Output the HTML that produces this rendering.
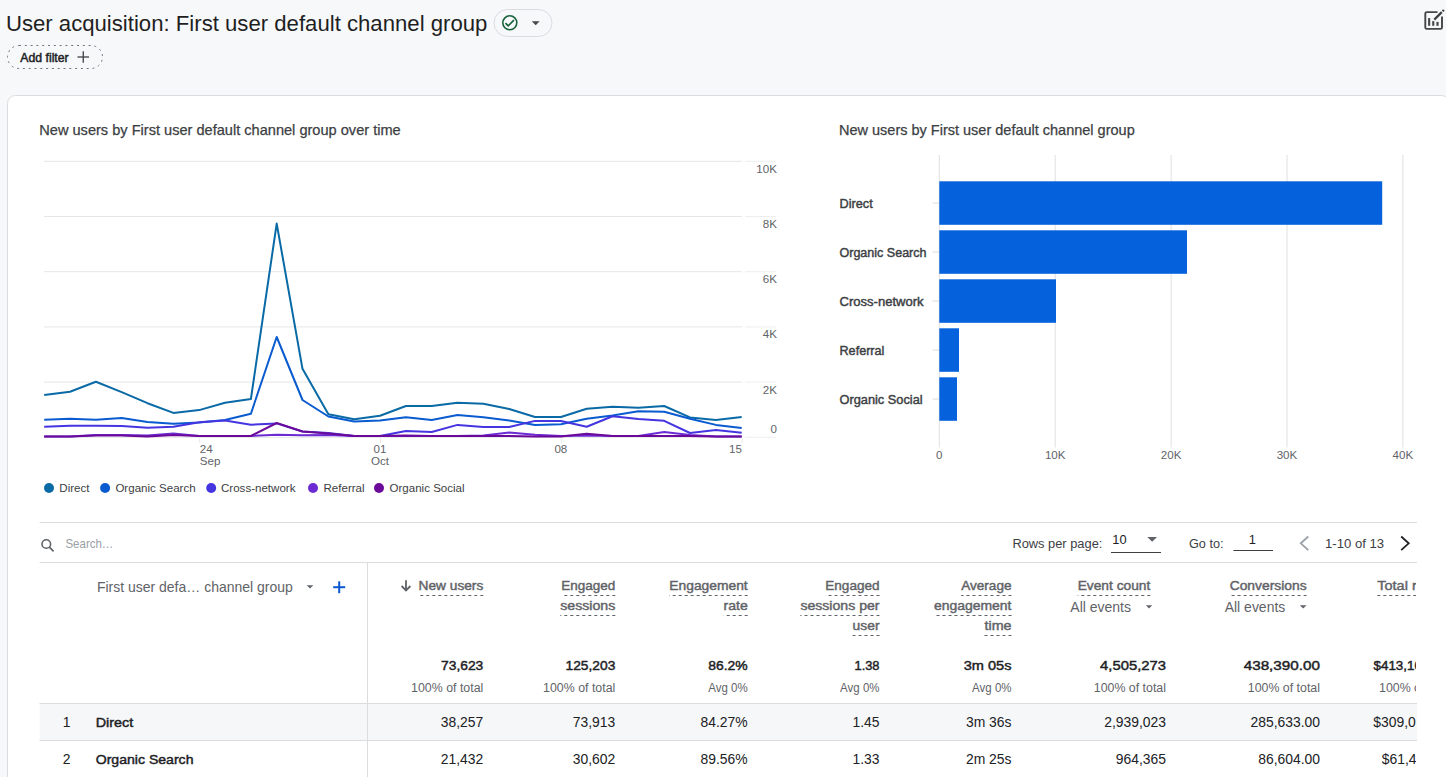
<!DOCTYPE html>
<html><head><meta charset="utf-8">
<style>
html,body{margin:0;padding:0;width:1446px;height:777px;overflow:hidden;background:#f7f8fa;}
svg{display:block;font-family:"Liberation Sans", sans-serif;}
</style></head><body>
<svg width="1446" height="777" viewBox="0 0 1446 777">
<defs><clipPath id="tc"><rect x="1300" y="560" width="116" height="217"/></clipPath></defs>
<text x="5.9" y="31" font-size="22.5" fill="#1f1f1f" font-weight="normal" text-anchor="start"  textLength="481.5" lengthAdjust="spacingAndGlyphs">User acquisition: First user default channel group</text>
<rect x="494" y="9.5" width="58" height="27" rx="13.5" fill="none" stroke="#dadce0" stroke-width="1"/>
<circle cx="509.8" cy="22.8" r="7.0" fill="none" stroke="#17623a" stroke-width="1.6"/>
<path d="M505.5 23.2 L508.2 25.9 L513.9 20.2" fill="none" stroke="#17623a" stroke-width="1.7"/>
<path d="M531.8 21.2 L539.6 21.2 L535.7 25.2 Z" fill="#444746"/>
<rect x="7.5" y="45.5" width="95" height="23" rx="11.5" fill="none" stroke="#70757a" stroke-width="1" stroke-dasharray="2 3.8"/>
<text x="20.3" y="61.8" font-size="11.9" fill="#202124" font-weight="normal" text-anchor="start"  stroke="#202124" stroke-width="0.45" textLength="48.4" lengthAdjust="spacingAndGlyphs">Add filter</text>
<line x1="77.5" y1="57" x2="89" y2="57" stroke="#3c4043" stroke-width="1.3" />
<line x1="83.25" y1="51.3" x2="83.25" y2="62.8" stroke="#3c4043" stroke-width="1.3" />
<path d="M1437.5 12.1 H1426.8 A1.5 1.5 0 0 0 1425.3 13.6 V27.4 A1.5 1.5 0 0 0 1426.8 28.9 H1440.5 A1.5 1.5 0 0 0 1442 27.4 V16.5" fill="none" stroke="#444746" stroke-width="1.9"/>
<rect x="1428.1" y="18.1" width="2.1" height="7.7" fill="#444746" />
<rect x="1432.2" y="21.1" width="2.1" height="4.7" fill="#444746" />
<rect x="1436.4" y="21.9" width="2.2" height="3.9" fill="#444746" />
<path d="M1434.3 19.6 L1441.8 12.1" fill="none" stroke="#3c4043" stroke-width="2.2"/>
<path d="M1442.6 11.3 L1443.9 10" fill="none" stroke="#3c4043" stroke-width="2.2"/>
<rect x="7.5" y="95.5" width="1442" height="720" rx="8" fill="#fff" stroke="#dadce0" stroke-width="1"/>
<text x="39.3" y="134.9" font-size="14.5" fill="#3c4043" font-weight="normal" text-anchor="start"  stroke="#3c4043" stroke-width="0.25" textLength="361.4" lengthAdjust="spacingAndGlyphs">New users by First user default channel group over time</text>
<line x1="44" y1="161.3" x2="742" y2="161.3" stroke="#e6e6e6" stroke-width="1" />
<line x1="745" y1="161.3" x2="776" y2="161.3" stroke="#eeeeee" stroke-width="1" />
<line x1="44" y1="216.5" x2="742" y2="216.5" stroke="#e6e6e6" stroke-width="1" />
<line x1="745" y1="216.5" x2="776" y2="216.5" stroke="#eeeeee" stroke-width="1" />
<line x1="44" y1="271.7" x2="742" y2="271.7" stroke="#e6e6e6" stroke-width="1" />
<line x1="745" y1="271.7" x2="776" y2="271.7" stroke="#eeeeee" stroke-width="1" />
<line x1="44" y1="326.9" x2="742" y2="326.9" stroke="#e6e6e6" stroke-width="1" />
<line x1="745" y1="326.9" x2="776" y2="326.9" stroke="#eeeeee" stroke-width="1" />
<line x1="44" y1="382.1" x2="742" y2="382.1" stroke="#e6e6e6" stroke-width="1" />
<line x1="745" y1="382.1" x2="776" y2="382.1" stroke="#eeeeee" stroke-width="1" />
<line x1="44" y1="437.3" x2="742" y2="437.3" stroke="#e6e6e6" stroke-width="1" />
<line x1="745" y1="437.3" x2="776" y2="437.3" stroke="#eeeeee" stroke-width="1" />
<text x="777" y="172.8" font-size="11.6" fill="#5f6368" font-weight="normal" text-anchor="end" >10K</text>
<text x="777" y="228.0" font-size="11.6" fill="#5f6368" font-weight="normal" text-anchor="end" >8K</text>
<text x="777" y="283.2" font-size="11.6" fill="#5f6368" font-weight="normal" text-anchor="end" >6K</text>
<text x="777" y="338.4" font-size="11.6" fill="#5f6368" font-weight="normal" text-anchor="end" >4K</text>
<text x="777" y="393.6" font-size="11.6" fill="#5f6368" font-weight="normal" text-anchor="end" >2K</text>
<text x="777" y="432.7" font-size="11.6" fill="#5f6368" font-weight="normal" text-anchor="end" >0</text>
<line x1="199.7" y1="437.5" x2="199.7" y2="443" stroke="#e8e8e8" stroke-width="1" />
<line x1="380.5333333333333" y1="437.5" x2="380.5333333333333" y2="443" stroke="#e8e8e8" stroke-width="1" />
<line x1="561.3666666666667" y1="437.5" x2="561.3666666666667" y2="443" stroke="#e8e8e8" stroke-width="1" />
<line x1="742.2" y1="437.5" x2="742.2" y2="443" stroke="#e8e8e8" stroke-width="1" />
<text x="199.8" y="452.7" font-size="11.6" fill="#5f6368" font-weight="normal" text-anchor="start" >24</text>
<text x="199.8" y="464.5" font-size="11.6" fill="#5f6368" font-weight="normal" text-anchor="start" >Sep</text>
<text x="380.0333333333333" y="452.7" font-size="11.6" fill="#5f6368" font-weight="normal" text-anchor="middle" >01</text>
<text x="380.0333333333333" y="464.5" font-size="11.6" fill="#5f6368" font-weight="normal" text-anchor="middle" >Oct</text>
<text x="560.8666666666667" y="452.7" font-size="11.6" fill="#5f6368" font-weight="normal" text-anchor="middle" >08</text>
<text x="742" y="452.7" font-size="11.6" fill="#5f6368" font-weight="normal" text-anchor="end" >15</text>
<polyline points="44.2,394.9 70.0,391.7 95.9,381.8 121.7,392.1 147.5,403.2 173.4,412.9 199.2,410.1 225.0,402.8 250.9,399 276.7,223.6 302.5,368.8 328.4,414.2 354.2,419.3 380.0,415.7 405.9,406 431.7,406 457.5,402.8 483.4,403.7 509.2,409 535.0,417 560.9,417 586.7,408.7 612.5,406.8 638.4,407.8 664.2,406 690.0,417.4 715.9,419.9 741.7,417" fill="none" stroke="#0a6aa6" stroke-width="2" stroke-linejoin="round"/>
<polyline points="44.2,419.8 70.0,418.7 95.9,419.8 121.7,418 147.5,421.9 173.4,423.7 199.2,422.6 225.0,420 250.9,413.7 276.7,337 302.5,400 328.4,416.5 354.2,421.5 380.0,420.6 405.9,417.2 431.7,419.9 457.5,414.9 483.4,417.2 509.2,420.5 535.0,424.9 560.9,424.3 586.7,418.7 612.5,415.5 638.4,411.2 664.2,411.8 690.0,418.7 715.9,424.9 741.7,428" fill="none" stroke="#0a5bd0" stroke-width="2" stroke-linejoin="round"/>
<polyline points="44.2,426.7 70.0,425.7 95.9,425.7 121.7,426 147.5,427.8 173.4,426.7 199.2,422.3 225.0,420.5 250.9,424.7 276.7,423.4 302.5,431.5 328.4,432.9 354.2,436.1 380.0,436.1 405.9,431.1 431.7,432 457.5,424.9 483.4,427 509.2,427 535.0,420.9 560.9,420.9 586.7,426.7 612.5,416.2 638.4,418.9 664.2,420.8 690.0,433 715.9,429.9 741.7,432.7" fill="none" stroke="#4535e0" stroke-width="2" stroke-linejoin="round"/>
<polyline points="44.2,436.5 70.0,436.5 95.9,435 121.7,435 147.5,435.5 173.4,433.6 199.2,436 225.0,436 250.9,436 276.7,434.8 302.5,435.2 328.4,435 354.2,436 380.0,436 405.9,436 431.7,436 457.5,436 483.4,435.5 509.2,432.6 535.0,434.8 560.9,436 586.7,435.5 612.5,436 638.4,436 664.2,432 690.0,435 715.9,436.5 741.7,436.5" fill="none" stroke="#6c2bd3" stroke-width="2" stroke-linejoin="round"/>
<polyline points="44.2,436.5 70.0,436.5 95.9,435.5 121.7,435.5 147.5,436.5 173.4,435 199.2,436 225.0,436 250.9,436 276.7,423 302.5,431.5 328.4,433.5 354.2,436 380.0,436 405.9,435.5 431.7,436 457.5,436 483.4,436 509.2,436 535.0,436.5 560.9,436.5 586.7,433.8 612.5,436 638.4,436 664.2,436 690.0,436 715.9,436.5 741.7,436.5" fill="none" stroke="#6b0a9a" stroke-width="2" stroke-linejoin="round"/>
<circle cx="49" cy="488" r="5" fill="#0a6aa6"/>
<text x="59.3" y="491.8" font-size="11.55" fill="#3c4043" font-weight="normal" text-anchor="start" >Direct</text>
<circle cx="105.1" cy="488" r="5" fill="#0a5bd0"/>
<text x="115.4" y="491.8" font-size="11.55" fill="#3c4043" font-weight="normal" text-anchor="start" >Organic Search</text>
<circle cx="211.2" cy="488" r="5" fill="#4535e0"/>
<text x="221" y="491.8" font-size="11.55" fill="#3c4043" font-weight="normal" text-anchor="start" >Cross-network</text>
<circle cx="313" cy="488" r="5" fill="#6c2bd3"/>
<text x="323.5" y="491.8" font-size="11.55" fill="#3c4043" font-weight="normal" text-anchor="start" >Referral</text>
<circle cx="379" cy="488" r="5" fill="#6b0a9a"/>
<text x="389.5" y="491.8" font-size="11.55" fill="#3c4043" font-weight="normal" text-anchor="start" >Organic Social</text>
<text x="839" y="135.4" font-size="14.5" fill="#3c4043" font-weight="normal" text-anchor="start"  stroke="#3c4043" stroke-width="0.25" textLength="295.7" lengthAdjust="spacingAndGlyphs">New users by First user default channel group</text>
<line x1="939.3" y1="155" x2="939.3" y2="447.5" stroke="#e0e0e0" stroke-width="1" />
<text x="939.3" y="459" font-size="11.6" fill="#5f6368" font-weight="normal" text-anchor="middle" >0</text>
<line x1="1055.2" y1="155" x2="1055.2" y2="447.5" stroke="#e0e0e0" stroke-width="1" />
<text x="1055.2" y="459" font-size="11.6" fill="#5f6368" font-weight="normal" text-anchor="middle" >10K</text>
<line x1="1171.1" y1="155" x2="1171.1" y2="447.5" stroke="#e0e0e0" stroke-width="1" />
<text x="1171.1" y="459" font-size="11.6" fill="#5f6368" font-weight="normal" text-anchor="middle" >20K</text>
<line x1="1287.0" y1="155" x2="1287.0" y2="447.5" stroke="#e0e0e0" stroke-width="1" />
<text x="1287.0" y="459" font-size="11.6" fill="#5f6368" font-weight="normal" text-anchor="middle" >30K</text>
<line x1="1402.9" y1="155" x2="1402.9" y2="447.5" stroke="#e0e0e0" stroke-width="1" />
<text x="1402.9" y="459" font-size="11.6" fill="#5f6368" font-weight="normal" text-anchor="middle" >40K</text>
<rect x="939.3" y="181.3" width="442.9000000000001" height="43.5" fill="#0562dc" />
<line x1="932.5" y1="203.10000000000002" x2="939" y2="203.10000000000002" stroke="#dadce0" stroke-width="1" />
<text x="839.5" y="208.0" font-size="13.2" fill="#3c4043" font-weight="normal" text-anchor="start"  stroke="#3c4043" stroke-width="0.45" textLength="33.2" lengthAdjust="spacingAndGlyphs">Direct</text>
<rect x="939.3" y="230.3" width="247.70000000000005" height="43.5" fill="#0562dc" />
<line x1="932.5" y1="252.10000000000002" x2="939" y2="252.10000000000002" stroke="#dadce0" stroke-width="1" />
<text x="839.5" y="257.0" font-size="13.2" fill="#3c4043" font-weight="normal" text-anchor="start"  stroke="#3c4043" stroke-width="0.45" textLength="87" lengthAdjust="spacingAndGlyphs">Organic Search</text>
<rect x="939.3" y="279.3" width="116.70000000000005" height="43.5" fill="#0562dc" />
<line x1="932.5" y1="301.1" x2="939" y2="301.1" stroke="#dadce0" stroke-width="1" />
<text x="839.5" y="306.0" font-size="13.2" fill="#3c4043" font-weight="normal" text-anchor="start"  stroke="#3c4043" stroke-width="0.45" textLength="84.1" lengthAdjust="spacingAndGlyphs">Cross-network</text>
<rect x="939.3" y="328.3" width="19.700000000000045" height="43.5" fill="#0562dc" />
<line x1="932.5" y1="350.1" x2="939" y2="350.1" stroke="#dadce0" stroke-width="1" />
<text x="839.5" y="355.0" font-size="13.2" fill="#3c4043" font-weight="normal" text-anchor="start"  stroke="#3c4043" stroke-width="0.45" textLength="44.9" lengthAdjust="spacingAndGlyphs">Referral</text>
<rect x="939.3" y="377.3" width="17.700000000000045" height="43.5" fill="#0562dc" />
<line x1="932.5" y1="399.1" x2="939" y2="399.1" stroke="#dadce0" stroke-width="1" />
<text x="839.5" y="404.0" font-size="13.2" fill="#3c4043" font-weight="normal" text-anchor="start"  stroke="#3c4043" stroke-width="0.45" textLength="83.1" lengthAdjust="spacingAndGlyphs">Organic Social</text>
<line x1="39.5" y1="522.5" x2="1417" y2="522.5" stroke="#dcdcdc" stroke-width="1" />
<line x1="39.5" y1="562.5" x2="1417" y2="562.5" stroke="#dcdcdc" stroke-width="1" />
<circle cx="46.3" cy="544" r="4.3" fill="none" stroke="#5f6368" stroke-width="1.6"/>
<line x1="49.4" y1="547.1" x2="53.6" y2="551.3" stroke="#5f6368" stroke-width="1.7" />
<text x="65.4" y="547.7" font-size="12.1" fill="#9aa0a6" font-weight="normal" text-anchor="start"  textLength="48" lengthAdjust="spacingAndGlyphs">Search…</text>
<text x="1012.4" y="548" font-size="12.85" fill="#3c4043" font-weight="normal" text-anchor="start" >Rows per page:</text>
<text x="1112.3" y="543.8" font-size="12.85" fill="#202124" font-weight="normal" text-anchor="start" >10</text>
<path d="M1147.3 537 L1157 537 L1152.15 541.8 Z" fill="#5f6368"/>
<line x1="1111" y1="552.5" x2="1161" y2="552.5" stroke="#3c4043" stroke-width="1" />
<text x="1189" y="548" font-size="12.7" fill="#3c4043" font-weight="normal" text-anchor="start" >Go to:</text>
<text x="1252.3" y="543.8" font-size="12.85" fill="#202124" font-weight="normal" text-anchor="middle" >1</text>
<line x1="1233.4" y1="550.5" x2="1273" y2="550.5" stroke="#3c4043" stroke-width="1" />
<path d="M1308.3 536.5 L1300.8 543.3 L1308.3 550.1" fill="none" stroke="#9aa0a6" stroke-width="1.8"/>
<text x="1325" y="548.3" font-size="13.15" fill="#3c4043" font-weight="normal" text-anchor="start" >1-10 of 13</text>
<path d="M1401.2 536.5 L1408.7 543.3 L1401.2 550.1" fill="none" stroke="#202124" stroke-width="1.8"/>
<rect x="39.5" y="704" width="1377.5" height="36" fill="#f6f7f9" />
<line x1="39.5" y1="703.5" x2="1417" y2="703.5" stroke="#dcdcdc" stroke-width="1" />
<line x1="39.5" y1="740.5" x2="1417" y2="740.5" stroke="#dcdcdc" stroke-width="1" />
<line x1="367.5" y1="563" x2="367.5" y2="777" stroke="#dcdcdc" stroke-width="1" />
<text x="96.9" y="591.8" font-size="13.99" fill="#5f6368" font-weight="normal" text-anchor="start" >First user defa… channel group</text>
<path d="M306.7 585.2 L313.3 585.2 L310 588.6 Z" fill="#5f6368"/>
<line x1="333.2" y1="587.2" x2="345.2" y2="587.2" stroke="#0b57d0" stroke-width="2" />
<line x1="339.2" y1="581.3" x2="339.2" y2="593.2" stroke="#0b57d0" stroke-width="2" />
<path d="M406 580.3 V590.2 M401.6 586 L406 590.4 L410.4 586" fill="none" stroke="#5f6368" stroke-width="1.8"/>
<text x="483.3" y="589.9" font-size="13.6" fill="#5f6368" font-weight="normal" text-anchor="end"  stroke="#5f6368" stroke-width="0.45" textLength="64.8" lengthAdjust="spacingAndGlyphs">New users</text>
<line x1="483.3" y1="595.5" x2="418.4" y2="595.5" stroke="#5f6368" stroke-width="1" stroke-dasharray="3 3"/>
<text x="615.3" y="589.9" font-size="13.6" fill="#5f6368" font-weight="normal" text-anchor="end"  stroke="#5f6368" stroke-width="0.45" textLength="54" lengthAdjust="spacingAndGlyphs">Engaged</text>
<line x1="615.3" y1="595.5" x2="561.3" y2="595.5" stroke="#5f6368" stroke-width="1" stroke-dasharray="3 3"/>
<text x="615.3" y="609.9" font-size="13.6" fill="#5f6368" font-weight="normal" text-anchor="end"  stroke="#5f6368" stroke-width="0.45" textLength="55" lengthAdjust="spacingAndGlyphs">sessions</text>
<line x1="615.3" y1="615.5" x2="560.3" y2="615.5" stroke="#5f6368" stroke-width="1" stroke-dasharray="3 3"/>
<text x="747.7" y="589.9" font-size="13.6" fill="#5f6368" font-weight="normal" text-anchor="end"  stroke="#5f6368" stroke-width="0.45" textLength="78.4" lengthAdjust="spacingAndGlyphs">Engagement</text>
<line x1="747.7" y1="595.5" x2="669.3000000000001" y2="595.5" stroke="#5f6368" stroke-width="1" stroke-dasharray="3 3"/>
<text x="747.7" y="609.9" font-size="13.6" fill="#5f6368" font-weight="normal" text-anchor="end"  stroke="#5f6368" stroke-width="0.45" textLength="24.2" lengthAdjust="spacingAndGlyphs">rate</text>
<line x1="747.7" y1="615.5" x2="723.5" y2="615.5" stroke="#5f6368" stroke-width="1" stroke-dasharray="3 3"/>
<text x="879.5" y="589.9" font-size="13.6" fill="#5f6368" font-weight="normal" text-anchor="end"  stroke="#5f6368" stroke-width="0.45" textLength="54.2" lengthAdjust="spacingAndGlyphs">Engaged</text>
<line x1="879.5" y1="595.5" x2="825.3" y2="595.5" stroke="#5f6368" stroke-width="1" stroke-dasharray="3 3"/>
<text x="879.5" y="609.9" font-size="13.6" fill="#5f6368" font-weight="normal" text-anchor="end"  stroke="#5f6368" stroke-width="0.45" textLength="79.1" lengthAdjust="spacingAndGlyphs">sessions per</text>
<line x1="879.5" y1="615.5" x2="800.4" y2="615.5" stroke="#5f6368" stroke-width="1" stroke-dasharray="3 3"/>
<text x="879.5" y="629.9" font-size="13.6" fill="#5f6368" font-weight="normal" text-anchor="end"  stroke="#5f6368" stroke-width="0.45" textLength="26.9" lengthAdjust="spacingAndGlyphs">user</text>
<line x1="879.5" y1="635.5" x2="852.6" y2="635.5" stroke="#5f6368" stroke-width="1" stroke-dasharray="3 3"/>
<text x="1011.5" y="589.9" font-size="13.6" fill="#5f6368" font-weight="normal" text-anchor="end"  stroke="#5f6368" stroke-width="0.45" textLength="50.3" lengthAdjust="spacingAndGlyphs">Average</text>
<line x1="1011.5" y1="595.5" x2="961.2" y2="595.5" stroke="#5f6368" stroke-width="1" stroke-dasharray="3 3"/>
<text x="1011.5" y="609.9" font-size="13.6" fill="#5f6368" font-weight="normal" text-anchor="end"  stroke="#5f6368" stroke-width="0.45" textLength="77.6" lengthAdjust="spacingAndGlyphs">engagement</text>
<line x1="1011.5" y1="615.5" x2="933.9" y2="615.5" stroke="#5f6368" stroke-width="1" stroke-dasharray="3 3"/>
<text x="1011.5" y="629.9" font-size="13.6" fill="#5f6368" font-weight="normal" text-anchor="end"  stroke="#5f6368" stroke-width="0.45" textLength="27" lengthAdjust="spacingAndGlyphs">time</text>
<line x1="1011.5" y1="635.5" x2="984.5" y2="635.5" stroke="#5f6368" stroke-width="1" stroke-dasharray="3 3"/>
<text x="1150.3" y="589.9" font-size="13.6" fill="#5f6368" font-weight="normal" text-anchor="end"  stroke="#5f6368" stroke-width="0.45" textLength="72.6" lengthAdjust="spacingAndGlyphs">Event count</text>
<line x1="1150.3" y1="595.5" x2="1077.7" y2="595.5" stroke="#5f6368" stroke-width="1" stroke-dasharray="3 3"/>
<text x="1131" y="611.6" font-size="14" fill="#5f6368" font-weight="normal" text-anchor="end"  textLength="60.7" lengthAdjust="spacingAndGlyphs">All events</text>
<path d="M1145.9 605.2 L1152.2 605.2 L1149.05 608.6 Z" fill="#5f6368"/>
<text x="1306.6" y="589.9" font-size="13.6" fill="#5f6368" font-weight="normal" text-anchor="end"  stroke="#5f6368" stroke-width="0.45" textLength="76.9" lengthAdjust="spacingAndGlyphs">Conversions</text>
<line x1="1306.6" y1="595.5" x2="1229.7" y2="595.5" stroke="#5f6368" stroke-width="1" stroke-dasharray="3 3"/>
<text x="1285.3" y="611.6" font-size="14" fill="#5f6368" font-weight="normal" text-anchor="end"  textLength="60.6" lengthAdjust="spacingAndGlyphs">All events</text>
<path d="M1299.8 605.2 L1306.6 605.2 L1303.2 608.6 Z" fill="#5f6368"/>
<g clip-path="url(#tc)">
<text x="1377.3" y="589.9" font-size="13.6" fill="#5f6368" font-weight="normal" text-anchor="start"  stroke="#5f6368" stroke-width="0.45" textLength="87" lengthAdjust="spacingAndGlyphs">Total revenue</text>
<line x1="1464.3" y1="595.5" x2="1377.3" y2="595.5" stroke="#5f6368" stroke-width="1" stroke-dasharray="3 3"/>
</g>
<text x="483.3" y="669.7" font-size="13.4" fill="#202124" font-weight="normal" text-anchor="end"  stroke="#202124" stroke-width="0.45" textLength="42.3" lengthAdjust="spacingAndGlyphs">73,623</text>
<text x="483.3" y="691.7" font-size="12" fill="#5f6368" font-weight="normal" text-anchor="end"  textLength="72.2" lengthAdjust="spacingAndGlyphs">100% of total</text>
<text x="483.3" y="727" font-size="13.9" fill="#202124" font-weight="normal" text-anchor="end" >38,257</text>
<text x="483.3" y="763.8" font-size="13.9" fill="#202124" font-weight="normal" text-anchor="end" >21,432</text>
<text x="615.3" y="669.7" font-size="13.4" fill="#202124" font-weight="normal" text-anchor="end"  stroke="#202124" stroke-width="0.45" textLength="49.8" lengthAdjust="spacingAndGlyphs">125,203</text>
<text x="615.3" y="691.7" font-size="12" fill="#5f6368" font-weight="normal" text-anchor="end"  textLength="72.2" lengthAdjust="spacingAndGlyphs">100% of total</text>
<text x="615.3" y="727" font-size="13.9" fill="#202124" font-weight="normal" text-anchor="end" >73,913</text>
<text x="615.3" y="763.8" font-size="13.9" fill="#202124" font-weight="normal" text-anchor="end" >30,602</text>
<text x="747.7" y="669.7" font-size="13.4" fill="#202124" font-weight="normal" text-anchor="end"  stroke="#202124" stroke-width="0.45" textLength="39.4" lengthAdjust="spacingAndGlyphs">86.2%</text>
<text x="747.7" y="691.7" font-size="12" fill="#5f6368" font-weight="normal" text-anchor="end"  textLength="39.4" lengthAdjust="spacingAndGlyphs">Avg 0%</text>
<text x="747.7" y="727" font-size="13.9" fill="#202124" font-weight="normal" text-anchor="end" >84.27%</text>
<text x="747.7" y="763.8" font-size="13.9" fill="#202124" font-weight="normal" text-anchor="end" >89.56%</text>
<text x="879.5" y="669.7" font-size="13.4" fill="#202124" font-weight="normal" text-anchor="end"  stroke="#202124" stroke-width="0.45" textLength="25" lengthAdjust="spacingAndGlyphs">1.38</text>
<text x="879.5" y="691.7" font-size="12" fill="#5f6368" font-weight="normal" text-anchor="end"  textLength="39.4" lengthAdjust="spacingAndGlyphs">Avg 0%</text>
<text x="879.5" y="727" font-size="13.9" fill="#202124" font-weight="normal" text-anchor="end" >1.45</text>
<text x="879.5" y="763.8" font-size="13.9" fill="#202124" font-weight="normal" text-anchor="end" >1.33</text>
<text x="1011.5" y="669.7" font-size="13.4" fill="#202124" font-weight="normal" text-anchor="end"  stroke="#202124" stroke-width="0.45" textLength="47.8" lengthAdjust="spacingAndGlyphs">3m 05s</text>
<text x="1011.5" y="691.7" font-size="12" fill="#5f6368" font-weight="normal" text-anchor="end"  textLength="39.4" lengthAdjust="spacingAndGlyphs">Avg 0%</text>
<text x="1011.5" y="727" font-size="13.9" fill="#202124" font-weight="normal" text-anchor="end" >3m 36s</text>
<text x="1011.5" y="763.8" font-size="13.9" fill="#202124" font-weight="normal" text-anchor="end" >2m 25s</text>
<text x="1166" y="669.7" font-size="13.4" fill="#202124" font-weight="normal" text-anchor="end"  stroke="#202124" stroke-width="0.45" textLength="65.9" lengthAdjust="spacingAndGlyphs">4,505,273</text>
<text x="1166" y="691.7" font-size="12" fill="#5f6368" font-weight="normal" text-anchor="end"  textLength="72.2" lengthAdjust="spacingAndGlyphs">100% of total</text>
<text x="1166" y="727" font-size="13.9" fill="#202124" font-weight="normal" text-anchor="end" >2,939,023</text>
<text x="1166" y="763.8" font-size="13.9" fill="#202124" font-weight="normal" text-anchor="end" >964,365</text>
<text x="1320" y="669.7" font-size="13.4" fill="#202124" font-weight="normal" text-anchor="end"  stroke="#202124" stroke-width="0.45" textLength="76.3" lengthAdjust="spacingAndGlyphs">438,390.00</text>
<text x="1320" y="691.7" font-size="12" fill="#5f6368" font-weight="normal" text-anchor="end"  textLength="72.2" lengthAdjust="spacingAndGlyphs">100% of total</text>
<text x="1320" y="727" font-size="13.9" fill="#202124" font-weight="normal" text-anchor="end" >285,633.00</text>
<text x="1320" y="763.8" font-size="13.9" fill="#202124" font-weight="normal" text-anchor="end" >86,604.00</text>
<g clip-path="url(#tc)">
<text x="1373.5" y="669.7" font-size="13.4" fill="#202124" font-weight="normal" text-anchor="start"  stroke="#202124" stroke-width="0.45">$413,100.00</text>
<text x="1379" y="691.7" font-size="12" fill="#5f6368" font-weight="normal" text-anchor="start"  textLength="72.2" lengthAdjust="spacingAndGlyphs">100% of total</text>
<text x="1373.3" y="727" font-size="13.9" fill="#202124" font-weight="normal" text-anchor="start" >$309,095.00</text>
<text x="1381.8" y="763.8" font-size="13.9" fill="#202124" font-weight="normal" text-anchor="start" >$61,476.00</text>
</g>
<text x="66.5" y="727" font-size="13.9" fill="#202124" font-weight="normal" text-anchor="middle" >1</text>
<text x="66.5" y="763.8" font-size="13.9" fill="#202124" font-weight="normal" text-anchor="middle" >2</text>
<text x="95.7" y="727" font-size="13.4" fill="#202124" font-weight="normal" text-anchor="start"  stroke="#202124" stroke-width="0.45" textLength="37.5" lengthAdjust="spacingAndGlyphs">Direct</text>
<text x="95.7" y="763.8" font-size="13.4" fill="#202124" font-weight="normal" text-anchor="start"  stroke="#202124" stroke-width="0.45" textLength="97.8" lengthAdjust="spacingAndGlyphs">Organic Search</text>
</svg>
</body></html>
